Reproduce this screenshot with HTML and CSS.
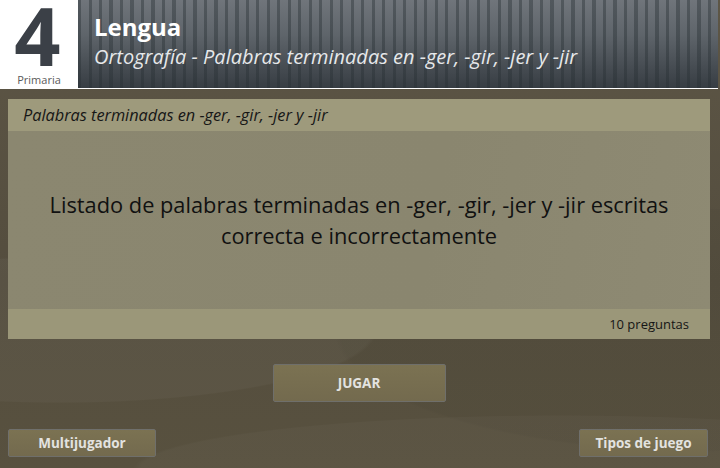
FILE: index.html
```html
<!DOCTYPE html>
<html lang="es">
<head>
<meta charset="utf-8">
<title>Lengua - Ortografía</title>
<link rel="stylesheet" href="styles.css">
</head>
<body>
<div class="page">
  <header class="top">
    <div class="grade">
      <span class="grade-num">4</span>
      <span class="grade-level">Primaria</span>
    </div>
    <div class="titlebar">
      <h1 class="subject">Lengua</h1>
      <p class="topic">Ortografía - Palabras terminadas en -ger, -gir, -jer y -jir</p>
    </div>
  </header>

  <section class="panel">
    <div class="panel-head">Palabras terminadas en -ger, -gir, -jer y -jir</div>
    <div class="panel-body">
      <p class="desc">Listado de palabras terminadas en -ger, -gir, -jer y -jir escritas correcta e incorrectamente</p>
    </div>
    <div class="panel-foot">10 preguntas</div>
  </section>

  <div class="play-row">
    <button class="btn btn-play">JUGAR</button>
  </div>

  <div class="bottom-row">
    <button class="btn btn-small btn-multi">Multijugador</button>
    <button class="btn btn-small btn-types">Tipos de juego</button>
  </div>
</div>
</body>
</html>
```

FILE: styles.css
```css
* { box-sizing: border-box; }
html, body { margin: 0; padding: 0; }
body {
  width: 720px;
  height: 468px;
  overflow: hidden;
  font-family: "Open Sans", "DejaVu Sans", sans-serif;
  background-color: #554e3f;
  background-image:
    radial-gradient(ellipse 520px 120px at 60px 330px, rgba(255,255,255,0.03) 0 60%, transparent 61%),
    radial-gradient(ellipse 700px 90px at 560px 470px, rgba(255,255,255,0.025) 0 60%, transparent 61%),
    radial-gradient(ellipse 600px 200px at 700px 330px, rgba(0,0,0,0.03) 0 60%, transparent 61%),
    linear-gradient(180deg, #5d5646 0%, #544d3e 60%, #58513f 100%);
}
.page {
  display: flex;
  flex-direction: column;
  height: 468px;
}

/* header */
.top {
  display: flex;
  height: 89px;
  width: 718px;
  border-bottom: 1px solid #ffffff;
}
.grade {
  width: 78px;
  background: #ffffff;
  display: flex;
  flex-direction: column;
  align-items: center;
  overflow: hidden;
}
.grade-num {
  display: block;
  font-family: "Open Sans", sans-serif;
  font-weight: 700;
  font-size: 81px;
  line-height: 62px;
  height: 62px;
  color: #3b4047;
  margin-top: 4px;
  margin-left: -3px;
}
.grade-level {
  display: block;
  font-size: 11px;
  line-height: 13px;
  color: #5a5a5a;
  margin-top: 7px;
}
.titlebar {
  flex: 1;
  padding: 12px 0 0 16px;
  background-color: #4f555b;
  background-image:
    repeating-linear-gradient(90deg, rgba(40,48,52,0.42) 0 3px, transparent 3px 10.5px),
    linear-gradient(180deg, #70757b 0%, #5e646a 40%, #474d53 75%, #373d43 100%);
  color: #ffffff;
}
.subject {
  margin: 0;
  font-size: 24px;
  line-height: 30px;
  font-weight: 700;
  color: #ffffff;
}
.topic {
  margin: 2px 0 0 0;
  font-size: 20px;
  line-height: 26px;
  font-style: italic;
  color: #e6e8ea;
}

/* panel */
.panel {
  margin: 10px 10px 0 8px;
  display: flex;
  flex-direction: column;
  height: 240px;
}
.panel-head {
  height: 32px;
  background: #9e9a7c;
  font-style: italic;
  font-size: 16.3px;
  line-height: 32px;
  padding-left: 15px;
  color: #161616;
}
.panel-body {
  height: 178px;
  background: linear-gradient(100deg, #8b8770 0%, #8a866f 60%, #8e8a73 100%);
  display: flex;
  align-items: center;
  justify-content: center;
  padding: 0 20px;
}
.desc {
  margin: 0;
  text-align: center;
  font-size: 21.8px;
  line-height: 31px;
  color: #111111;
}
.panel-foot {
  height: 30px;
  background: #9b9779;
  text-align: right;
  padding-right: 21px;
  font-size: 13px;
  line-height: 30px;
  color: #151515;
}

/* buttons */
.btn {
  font-family: "Open Sans", sans-serif;
  font-weight: 700;
  color: #e3e3e0;
  border: 1px solid #6f6f6b;
  border-radius: 2px;
  background: linear-gradient(180deg, #7b7252 0%, #736a4e 100%);
  padding: 0;
  cursor: pointer;
}
.play-row {
  display: flex;
  justify-content: center;
  padding: 25px 2px 0 0;
}
.btn-play {
  width: 173px;
  height: 38px;
  font-size: 13.5px;
}
.bottom-row {
  display: flex;
  justify-content: space-between;
  padding: 27px 12px 0 8px;
}
.btn-small {
  height: 28px;
  font-size: 13.5px;
}
.btn-multi { width: 148px; }
.btn-types { width: 129px; }
```
